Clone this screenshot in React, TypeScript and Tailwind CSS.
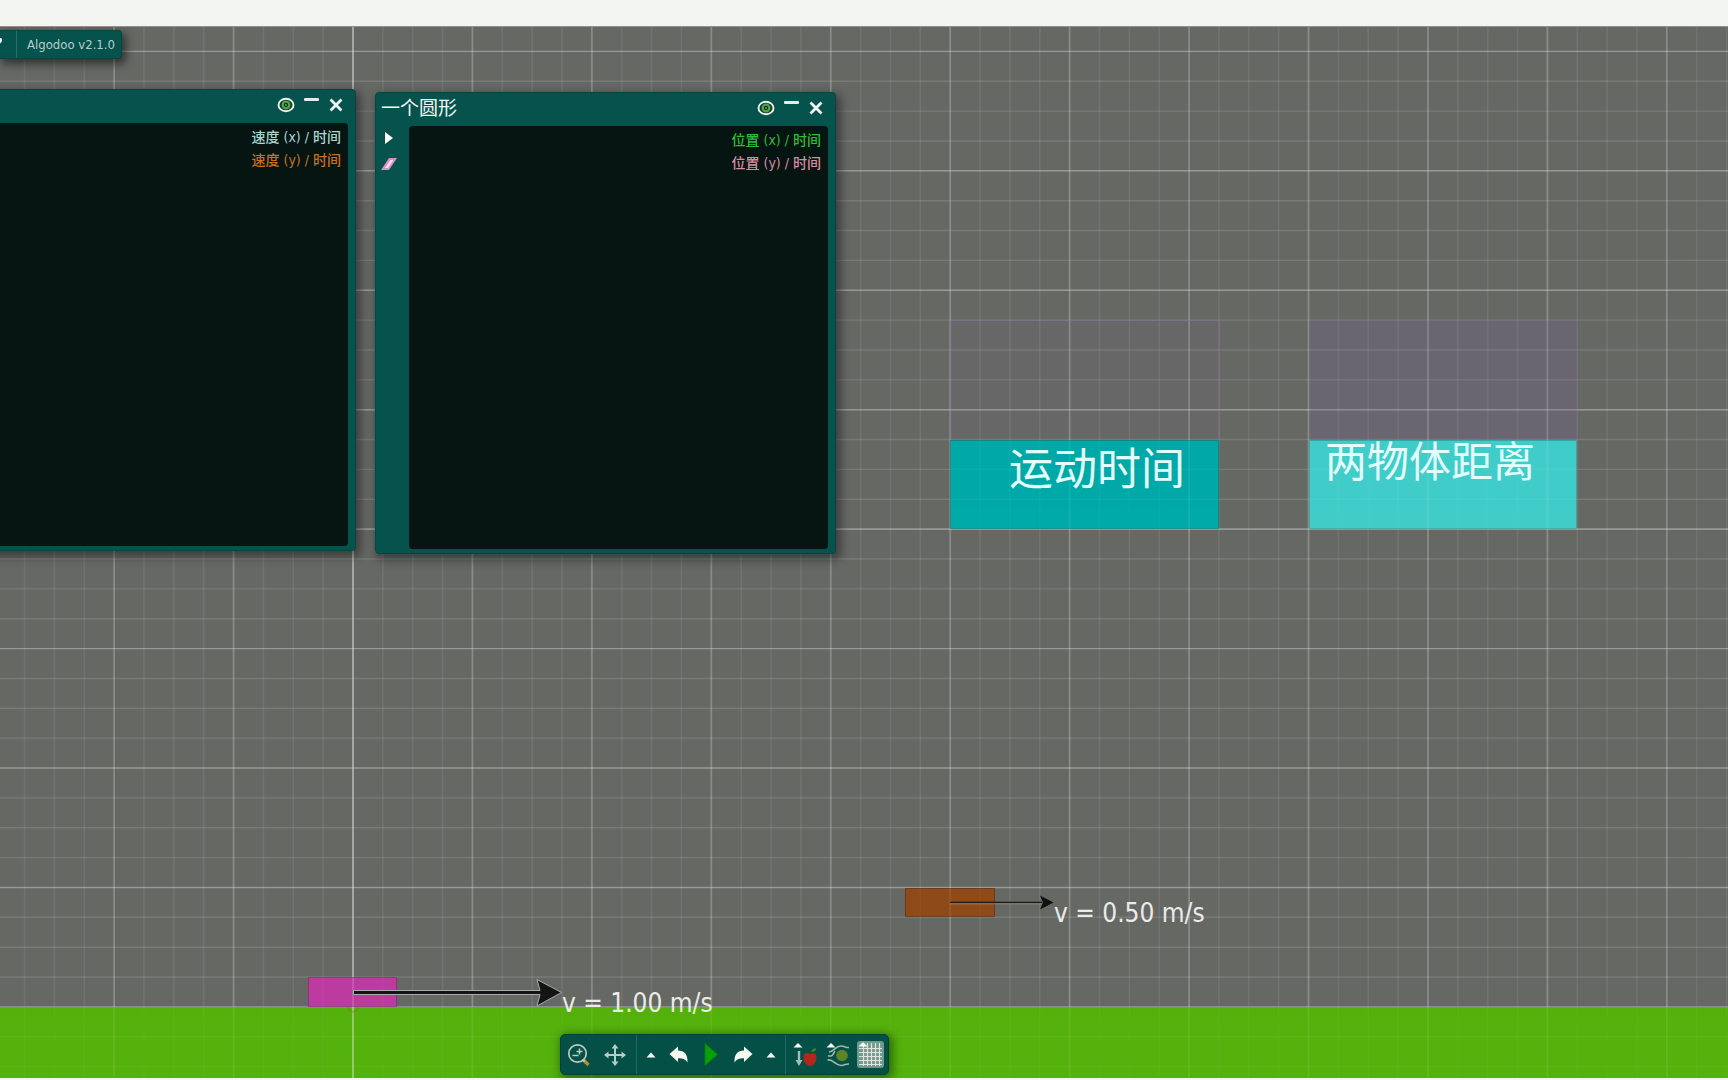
import type { ReactNode } from "react";

const CELL = 29.86;
const ORIGIN_X = 353;
const ORIGIN_Y = 1006.9;

const columns = Array.from({ length: 120 }, (_, i) => i - 12);
const rows = Array.from({ length: 90 }, (_, i) => i - 40);

const bodies = [
  { x: 950, y: 440, w: 269, h: 89, fill: "#00aaa8", stroke: "#0b8585" },
  { x: 1309, y: 440, w: 268, h: 89, fill: "#41ccc8", stroke: "#37a5a3" },
  { x: 905, y: 888, w: 90, h: 29, fill: "#8f4a1a", stroke: "#6b3a1a" },
  { x: 308, y: 977, w: 89, h: 30, fill: "#bd3b9f", stroke: "#8c3478" },
];

function GridLines() {
  return (
    <g id="grid" stroke="#ffffff">
      {columns.map((i) => {
        const x = ORIGIN_X + i * CELL;
        const major = i % 4 === 0;
        return (
          <line
            key={`c${i}`}
            x1={x}
            x2={x}
            y1={26}
            y2={3000}
            strokeWidth={i === 0 || major ? 1.8 : 1.6}
            strokeOpacity={i === 0 ? 0.46 : major ? 0.23 : 0.08}
          />
        );
      })}
      {rows.map((i) => {
        const y = ORIGIN_Y + i * CELL;
        const major = i % 4 === 0;
        return (
          <line
            key={`r${i}`}
            x1={0}
            x2={4000}
            y1={y}
            y2={y}
            strokeWidth={i === -16 ? 1.8 : 1.4}
            strokeOpacity={major ? 0.32 : 0.12}
          />
        );
      })}
    </g>
  );
}

function Scene() {
  return (
    <svg className="absolute inset-0 h-full w-full" aria-hidden="true">
      <defs>
        <clipPath id="solids">
          {bodies.map((b) => (
            <rect key={b.x} x={b.x} y={b.y} width={b.w} height={b.h} />
          ))}
          <rect x={0} y={1007} width={4000} height={2000} />
        </clipPath>
      </defs>
      <g transform="translate(0 -27)">
        <GridLines />
        <rect x={950.5} y={320.5} width={269} height={120} fill="#7c649c" fillOpacity={0.08} stroke="#8472a8" strokeOpacity={0.5} />
        <rect x={1309} y={320} width={269} height={120} fill="#7a60a0" fillOpacity={0.22} />
        <rect x={0} y={1007} width="100%" height={2000} fill="#55b10c" />
        {bodies.map((b) => (
          <rect key={b.x} x={b.x + 0.5} y={b.y + 0.5} width={b.w - 1} height={b.h - 1} fill={b.fill} stroke={b.stroke} />
        ))}
        <g clipPath="url(#solids)" opacity={0.35}>
          <use href="#grid" />
        </g>
        <line x1={353} x2={353} y1={1007} y2={1080} stroke="#fff" strokeOpacity={0.25} strokeWidth={2} />
        <path d="M348 1007a5 5 0 0 0 10 0" fill="none" stroke="#a0603c" strokeOpacity={0.7} />
        <path d="M353.500 990.500H540L537 979.500L561.500 992.500L537 1006L540 994.500H353.500Z" fill="#141414" stroke="#a9aaa9" strokeWidth={1} />
        <path d="M950 902.500H1042" stroke="#1a1a18" strokeWidth={1.600} />
        <path d="M950 903.800H1042" stroke="#a99a8c" strokeWidth={0.700} />
        <path d="M1040 895.500L1053.500 902.500L1040 909.500L1043 902.500Z" fill="#111" />
      </g>
    </svg>
  );
}

function EyeIcon() {
  return (
    <svg className="h-4 w-[18px]" viewBox="0 0 18 16" fill="none">
      <ellipse cx="9" cy="8" rx="7.5" ry="6.200" fill="#123d2c" stroke="#eef4ea" strokeWidth="1.900" />
      <circle cx="9" cy="8" r="3.300" fill="#0c2a1b" stroke="#4fa34a" strokeWidth="2.300" />
      <circle cx="9" cy="8" r="1" fill="#67ad5c" />
    </svg>
  );
}

function PlotWindow({
  place,
  title,
  series,
}: {
  place: string;
  title: string;
  series: { text: string; tone: string }[];
}) {
  return (
    <section
      className={`absolute flex h-[462px] w-[461px] flex-col rounded-[4px] border border-[#084440] bg-[#06524d] pr-[7px] pb-1 shadow-[3px_4px_10px_2px_rgba(0,0,0,0.4)] ${place}`}
    >
      <header className="flex h-[33px] items-start justify-between pl-[5px]">
        <h2 className="mt-[2px] font-['Noto_Sans_CJK_SC',sans-serif] text-[19px] leading-6 text-[#f2f7f4]">{title}</h2>
        <div className="mt-[7px] flex items-center gap-[7px] pr-[3px]">
          <button aria-label="Follow" className="flex w-[18px] justify-center">
            <EyeIcon />
          </button>
          <button aria-label="Minimize" className="flex h-4 w-[18px] justify-center pt-[1px]">
            <span className="h-[3px] w-[15px] rounded-[1px] bg-[#e4ecee]" />
          </button>
          <button aria-label="Close" className="flex w-[18px] justify-center">
            <svg className="h-4 w-4" viewBox="0 0 16 16" stroke="#f2f5f3" strokeWidth="2.800">
              <path d="M2.500 2.500L13.500 13.500M13.500 2.500L2.500 13.500" />
            </svg>
          </button>
        </div>
      </header>
      <div className="flex flex-1">
        <div className="flex w-[33px] flex-col items-start gap-3 pt-[5px] pl-[5px]">
          <button aria-label="Expand" className="pl-[3px]">
            <svg className="h-[14px] w-3" viewBox="0 0 12 14">
              <path d="M1 1L9 7L1 13Z" fill="#fff" />
            </svg>
          </button>
          <button aria-label="Clear plot">
            <svg className="h-[14px] w-4" viewBox="0 0 16 14">
              <path d="M8 1H16L8 13H0Z" fill="#d98fc0" />
              <path d="M9.500 3H12.500L7 11H4Z" fill="#f7e0f0" />
            </svg>
          </button>
        </div>
        <div className="flex flex-1 flex-col items-end rounded-[4px] bg-[#061412] pt-[3px] pr-[7px] font-['DejaVu_Sans_Condensed','Noto_Sans_CJK_SC',sans-serif] text-[14px] leading-[23px] font-medium">
          {series.map((s) => (
            <p key={s.text} className={s.tone}>
              {s.text}
            </p>
          ))}
        </div>
      </div>
    </section>
  );
}

function Tool({ label, size, children }: { label: string; size: string; children: ReactNode }) {
  return (
    <button aria-label={label} className={`flex h-full items-center justify-center ${size}`}>
      {children}
    </button>
  );
}

function UpMark() {
  return (
    <svg className="h-[6px] w-[10px]" viewBox="0 0 10 6">
      <path d="M5 0.500L9.500 5.500H0.500Z" fill="#fff" />
    </svg>
  );
}

function CurvedArrow({ flip = false }: { flip?: boolean }) {
  return (
    <svg className={flip ? "h-5 w-5 -scale-x-100" : "h-5 w-5"} viewBox="0 0 20 20">
      <path d="M0.500 9L9 1.500V5.500C15 5.500 19 9 18.500 17.500C16.500 14 13.500 13 9 13.200V17Z" fill="#f4f8ef" />
    </svg>
  );
}

function Toolbar() {
  return (
    <nav
      aria-label="Simulation"
      className="absolute bottom-[3px] left-[560px] flex h-[41px] items-stretch rounded-[5px] border border-[#04403a] bg-[#045046] shadow-[2px_2px_8px_2px_rgba(0,40,0,0.5)]"
    >
      <div className="flex border-r border-[#1b6b5e] pr-[3px]">
        <Tool label="Zoom" size="w-9">
          <svg className="h-6 w-6" viewBox="0 0 24 24" fill="none" stroke="#bccac0">
            <path d="M16.500 17L21.500 22" stroke="#c08a2c" strokeWidth="3.200" />
            <circle cx="10.500" cy="10.500" r="8.700" strokeWidth="1.700" />
            <path d="M9.500 8.500H15.500M12.500 5.500V11.500M5.500 12.500H11.500" strokeWidth="1.500" />
            <path d="M15.500 16.500L17.500 18.500" strokeWidth="2" />
          </svg>
        </Tool>
        <Tool label="Pan" size="w-9">
          <svg className="h-[22px] w-[22px]" viewBox="0 0 22 22">
            <path d="M11 3V19M3 11H19" stroke="#b9ccc4" strokeWidth="2" />
            <path d="M11 0L14.500 4.500H7.500ZM11 22L7.500 17.500H14.500ZM0 11L4.500 7.500V14.500ZM22 11L17.500 14.500V7.500Z" fill="#b9ccc4" />
          </svg>
        </Tool>
      </div>
      <div className="flex border-r border-[#1b6b5e] px-[2px]">
        <Tool label="Undo history" size="w-6">
          <UpMark />
        </Tool>
        <Tool label="Undo" size="w-8">
          <CurvedArrow />
        </Tool>
        <Tool label="Play" size="w-8">
          <svg className="h-[23px] w-[14px]" viewBox="0 0 14 23">
            <path d="M1 0.500L13.500 11.500L1 22.500Z" fill="#08a008" stroke="#067a10" />
          </svg>
        </Tool>
        <Tool label="Redo" size="w-8">
          <CurvedArrow flip />
        </Tool>
        <Tool label="Redo history" size="w-6">
          <UpMark />
        </Tool>
      </div>
      <div className="flex pr-[1px] pl-[2px]">
        <Tool label="Gravity" size="w-[33px]">
          <svg className="h-[26px] w-6" viewBox="0 0 24 26">
            <path d="M5 1L9.500 5.500H0.500Z" fill="#fff" />
            <path d="M6 9V19" stroke="#a9b9b2" strokeWidth="2.400" />
            <path d="M6 24L2.500 18H9.500Z" fill="#a9b9b2" />
            <path d="M17 12C21 9.500 24 12 23.500 16C23 20.500 20.500 24.500 17 23.500C13.500 24.500 11 20.500 10.500 16C10 12 13 9.500 17 12Z" fill="#b3261c" />
            <path d="M17 12C17 10 18 8.500 19 8" stroke="#5a3a18" strokeWidth="1.200" fill="none" />
            <path d="M18.500 9.500C19 7 21 6.500 23 6.500C23 9 20.500 10 18.500 9.500Z" fill="#4b8a22" />
          </svg>
        </Tool>
        <Tool label="Air friction" size="w-[33px]">
          <svg className="h-[26px] w-6" viewBox="0 0 24 26" fill="none">
            <path d="M5 1L9.500 5.500H0.500Z" fill="#fff" />
            <circle cx="16" cy="13.500" r="5.800" fill="#5f8425" />
            <path d="M3 10C8 10 9 4 15 4C19 4 20 6 23 5.500M2 14H5C7 14 7.500 11 9 9M1.500 18C7 16.500 9 23.500 15 23.500C19 23.500 20 21.500 23 22" stroke="#a3b6ac" strokeWidth="1.600" />
          </svg>
        </Tool>
        <Tool label="Grid" size="w-[33px]">
          <svg className="h-[27px] w-[27px]" viewBox="0 0 27 27">
            <rect width="27" height="27" rx="3" fill="#6f9a8c" />
            <path d="M6.500 2V25M10.500 2V25M14.500 2V25M18.500 2V25M22.500 2V25M2 7.500H25M2 11.500H25M2 15.500H25M2 19.500H25M2 23.500H25" stroke="#dce8df" strokeWidth="1.200" />
            <path d="M6 1L10.500 5.500H1.500Z" fill="#fff" />
          </svg>
        </Tool>
      </div>
    </nav>
  );
}

export default function App() {
  return (
    <div className="flex h-screen flex-col overflow-hidden bg-[#f3f5f2]">
      <div className="h-[26px] shrink-0" />
      <main className="relative flex-1 overflow-hidden border-t border-[#8e908c] bg-[#666864]">
        <Scene />

        <p className="absolute top-[409px] left-[1009px] font-['Noto_Sans_CJK_SC',sans-serif] text-[44px] leading-[60px] text-[#e2fffd]">
          运动时间
        </p>
        <p className="absolute top-[402px] left-[1325px] font-['Noto_Sans_CJK_SC',sans-serif] text-[42px] leading-[60px] text-[#e2fffd]">
          两物体距离
        </p>
        <p className="absolute top-[868px] left-[1054px] font-['DejaVu_Sans_Condensed','Noto_Sans',sans-serif] text-[26px] leading-9 text-[#ebebea]">
          v = 0.50 m/s
        </p>
        <p className="absolute top-[958px] left-[562px] font-['DejaVu_Sans_Condensed','Noto_Sans',sans-serif] text-[26px] leading-9 text-[#ebebea]">
          v = 1.00 m/s
        </p>

        <div className="absolute top-[3px] left-0 flex h-[29px] items-stretch rounded-r-[4px] border border-l-0 border-[#084440] bg-[#06524d] shadow-[3px_4px_8px_1px_rgba(0,0,0,0.5)]">
          <button aria-label="Help" className="flex w-[17px] items-start border-r border-[#257068] pt-[7px]">
            <svg className="h-2 w-2" viewBox="0 0 8 8">
              <path d="M-4 2.500C-3 -0.500 1 -0.500 1 2.500C1 4.500 -2 4.500 -2 7" fill="none" stroke="#fff" strokeWidth="2" />
            </svg>
          </button>
          <span className="pr-[6px] pl-[10px] font-['DejaVu_Sans_Condensed','Open_Sans',sans-serif] text-[13px] leading-[28px] whitespace-nowrap text-[#b4cfc9]">
            Algodoo v2.1.0
          </span>
        </div>

        <PlotWindow
          place="top-[62px] -left-[105px]"
          title=""
          series={[
            { text: "速度 (x) / 时间", tone: "text-[#a9d8cf]" },
            { text: "速度 (y) / 时间", tone: "text-[#cc6f1c]" },
          ]}
        />
        <PlotWindow
          place="top-[65px] left-[375px]"
          title="一个圆形"
          series={[
            { text: "位置 (x) / 时间", tone: "text-[#2bbf35]" },
            { text: "位置 (y) / 时间", tone: "text-[#dc8ba0]" },
          ]}
        />
        <Toolbar />
      </main>
      <div className="h-[2px] shrink-0" />
    </div>
  );
}
